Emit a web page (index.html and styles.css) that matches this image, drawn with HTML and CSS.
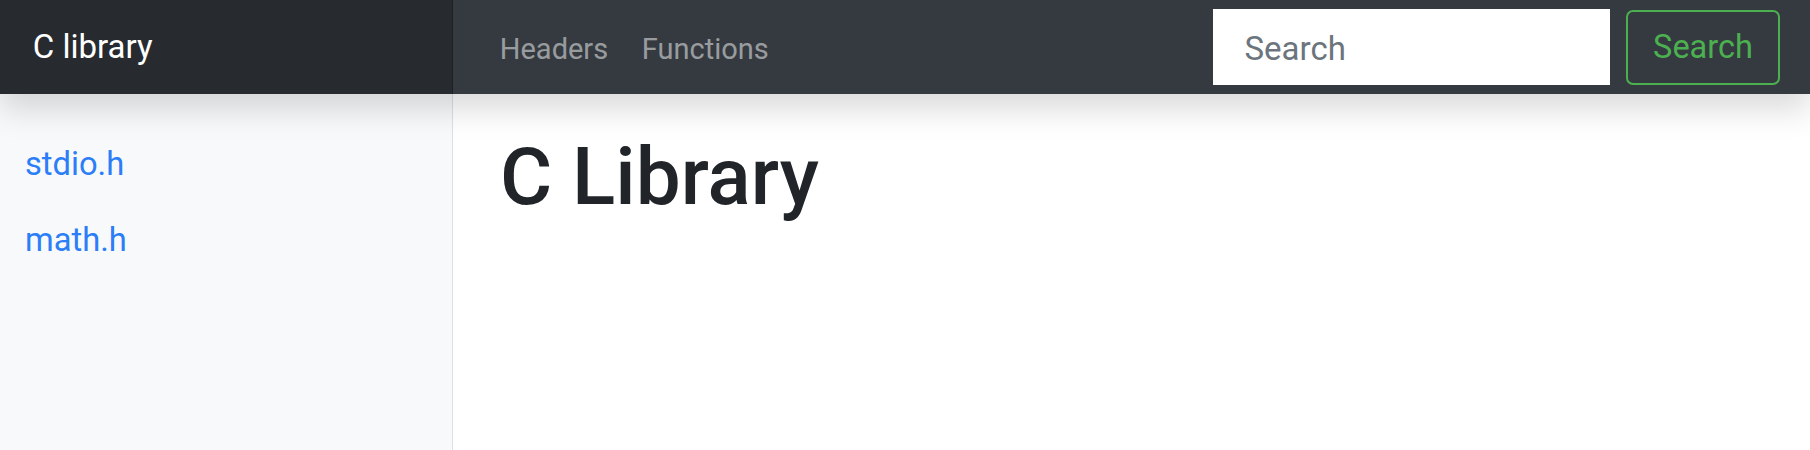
FILE: index.html
```html
<!DOCTYPE html>
<html lang="en">
<head>
<meta charset="utf-8">
<title>C library</title>
<link rel="stylesheet" href="styles.css">
</head>
<body>
<header class="navbar">
  <a class="brand" href="#">C library</a>
  <nav class="nav">
    <a class="nav-link" href="#">Headers</a>
    <a class="nav-link" href="#">Functions</a>
  </nav>
  <form class="search">
    <input class="search-input" type="text" placeholder="Search">
    <button class="search-btn" type="button">Search</button>
  </form>
</header>
<div class="layout">
  <aside class="sidebar">
    <a class="side-link" href="#">stdio.h</a>
    <a class="side-link" href="#">math.h</a>
  </aside>
  <main class="content">
    <h1 class="title">C Library</h1>
  </main>
</div>
</body>
</html>
```
FILE: styles.css
```css
* { box-sizing: border-box; }
html, body { margin: 0; height: 100%; }
body {
  font-family: Roboto, "Liberation Sans", Arial, sans-serif;
  background: #fff;
  color: #212529;
  display: flex;
  flex-direction: column;
  overflow: hidden;
}
a { text-decoration: none; }

.navbar {
  position: relative;
  z-index: 10;
  display: flex;
  align-items: center;
  height: 94px;
  flex: 0 0 94px;
  background: #343a40;
  box-shadow: 0 15px 30px rgba(0,0,0,.15);
}
.brand {
  align-self: stretch;
  display: flex;
  align-items: center;
  width: 453px;
  flex: 0 0 453px;
  padding-left: 32.8px;
  font-size: 33px;
  line-height: 1.2;
  color: #fff;
  background: rgba(0,0,0,.25);
  box-shadow: inset -1px 0 0 rgba(0,0,0,.25);
}
.nav {
  display: flex;
  margin-left: 30px;
  padding-top: 4px;
}
.nav-link {
  padding: 0 16.8px;
  font-size: 29px;
  line-height: 1.2;
  color: rgba(255,255,255,.5);
}
.search {
  display: flex;
  align-items: center;
  gap: 16px;
  margin: 0 30px 0 auto;
}
.search-input {
  width: 397px;
  height: 76px;
  margin: 0;
  padding: 3px 0 0 31.5px;
  border: 0;
  border-radius: 0;
  background: #fff;
  font-family: inherit;
  font-size: 33px;
  color: #495057;
  outline: none;
}
.search-input::placeholder { color: #6c757d; opacity: 1; }
.search-btn {
  width: 154px;
  height: 75px;
  margin: 0;
  padding: 0;
  border: 2px solid #4caf50;
  border-radius: 7px;
  background: transparent;
  font-family: inherit;
  font-size: 32.5px;
  color: #4caf50;
  cursor: pointer;
}

.layout {
  flex: 1;
  display: flex;
  min-height: 0;
}
.sidebar {
  width: 453px;
  flex: 0 0 453px;
  padding: 32px 0 0 25px;
  background: #f8f9fa;
  box-shadow: inset -1px 0 0 rgba(0,0,0,.1);
  display: flex;
  flex-direction: column;
}
.side-link {
  padding: 14px 0;
  font-size: 32.7px;
  line-height: 48px;
  color: #2b7ef7;
}
.content {
  flex: 1;
  padding: 35px 0 0 47px;
}
.title {
  margin: 0;
  font-size: 80px;
  font-weight: 500;
  line-height: 1.2;
  color: #212529;
}
```
